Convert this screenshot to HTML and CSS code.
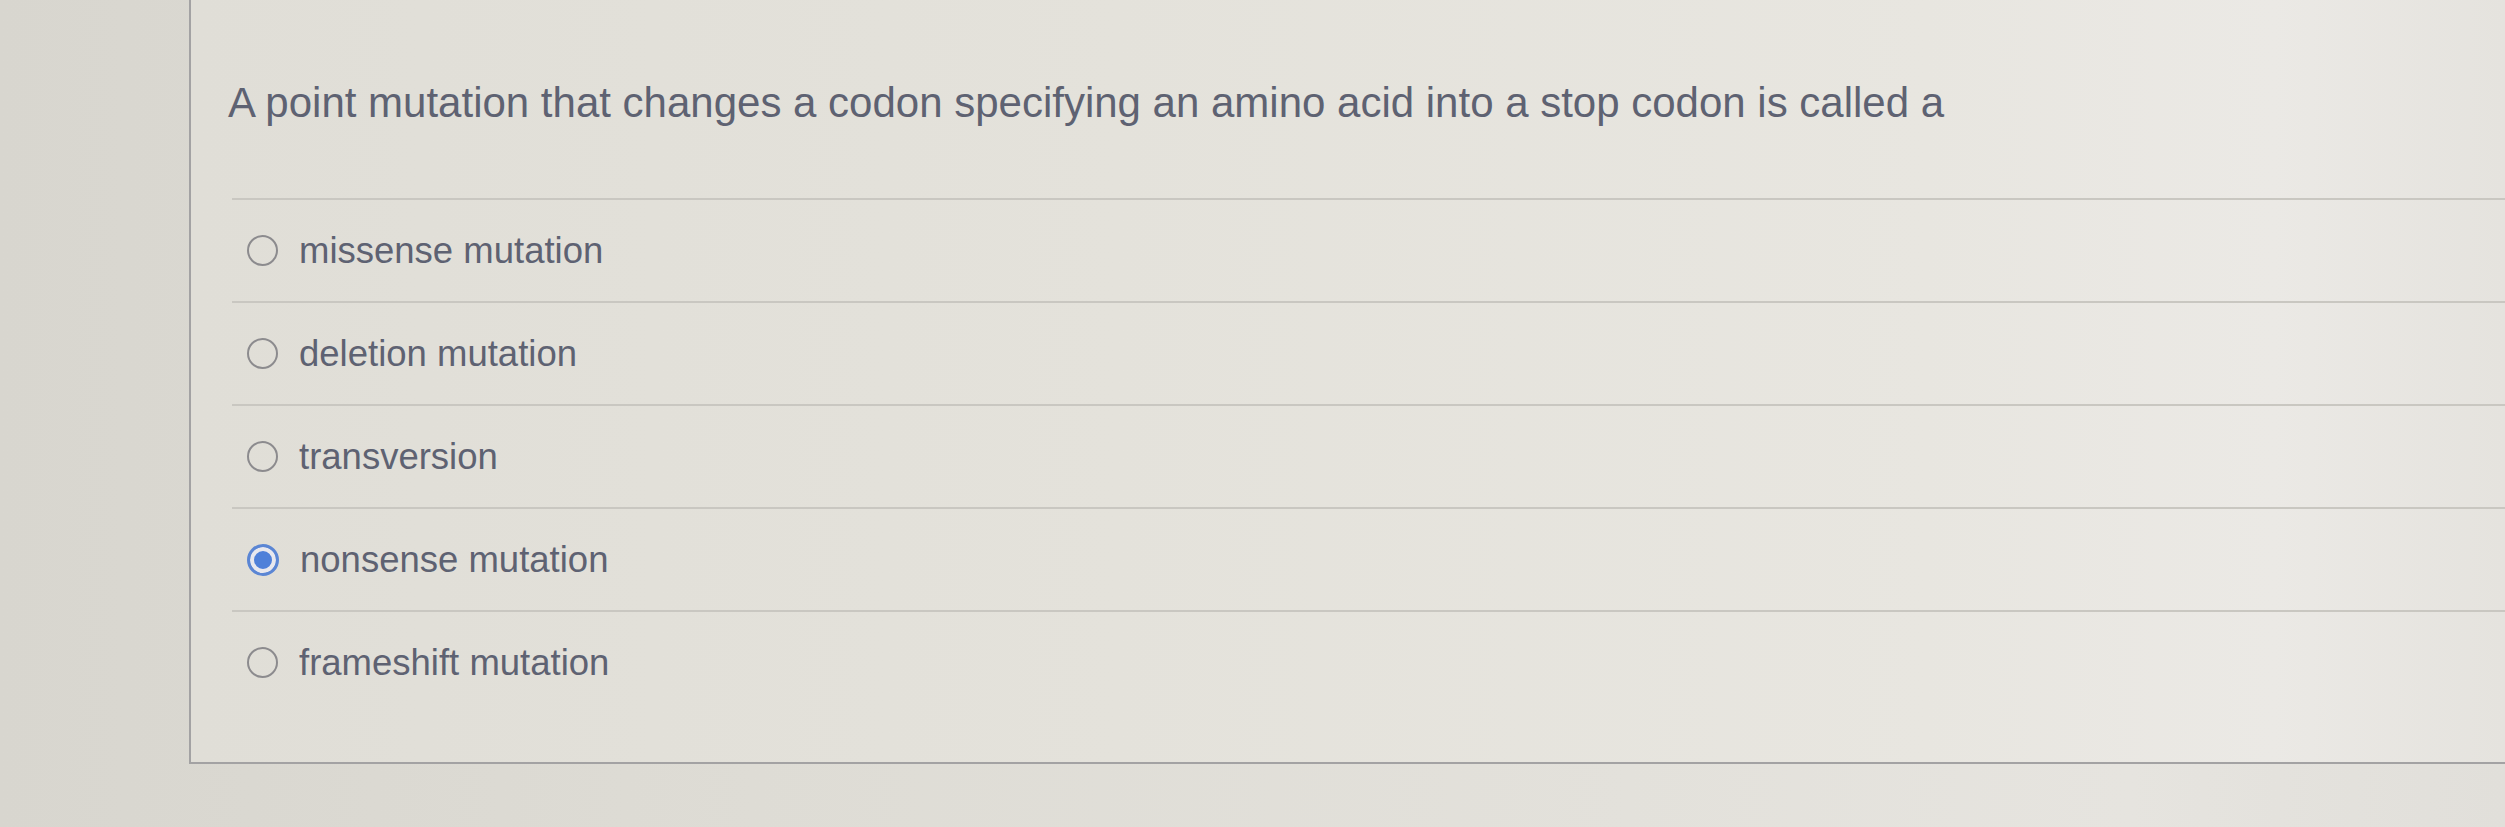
FILE: index.html
```html
<!DOCTYPE html>
<html>
<head>
<meta charset="utf-8">
<link rel="stylesheet" href="styles.css">
</head>
<body>
<div class="page">
  <div class="card">
    <div class="question">A point mutation that changes a codon specifying an amino acid into a stop codon is called a</div>
    <ul class="options">
      <li class="option"><span class="radio"></span><span class="label">missense mutation</span></li>
      <li class="option"><span class="radio"></span><span class="label">deletion mutation</span></li>
      <li class="option"><span class="radio"></span><span class="label">transversion</span></li>
      <li class="option"><span class="radio checked"></span><span class="label">nonsense mutation</span></li>
      <li class="option"><span class="radio"></span><span class="label">frameshift mutation</span></li>
    </ul>
  </div>
</div>
</body>
</html>
```
FILE: styles.css
```css
html, body {
  margin: 0;
  padding: 0;
}
body {
  width: 2505px;
  height: 827px;
  overflow: hidden;
  background: linear-gradient(90deg, #d8d6cf 0%, #dedcd5 30%, #e3e1db 65%, #e6e4df 85%, #e1dfda 100%);
  font-family: "Liberation Sans", Arial, sans-serif;
}
.page {
  padding-left: 189px;
}
.card {
  height: 762px;
  border-left: 2px solid #a3a2a3;
  border-bottom: 2px solid #a3a2a3;
  background: linear-gradient(90deg, #e0ded7 0%, #e4e2db 40%, #e8e6e0 75%, #ebe9e5 90%, #e5e3de 100%);
  padding-left: 41px;
  box-sizing: content-box;
}
.question {
  color: #5e6272;
  font-size: 42px;
  line-height: 48px;
  padding-top: 79px;
  height: 120px;
  box-sizing: border-box;
  margin-left: -4px;
}
.options {
  list-style: none;
  margin: 0;
  padding: 0;
  border-top: 2px solid #c9c7c1;
  margin-top: 78px;
}
.option {
  height: 101px;
  border-bottom: 2px solid #c9c7c1;
  display: flex;
  align-items: center;
  padding-left: 15px;
}
.option:last-child {
  border-bottom: none;
}
.radio {
  width: 27px;
  height: 27px;
  border: 2.5px solid #8c8b8e;
  border-radius: 50%;
  flex: none;
  margin-right: 21px;
  box-sizing: content-box;
}
.radio.checked {
  border: 3px solid #5b86d4;
  background: #4f80d9;
  box-shadow: inset 0 0 0 4px #e8e8ee;
  width: 26px;
  height: 26px;
}
.label {
  color: #5e6272;
  font-size: 36.5px;
  line-height: 44px;
}
```
